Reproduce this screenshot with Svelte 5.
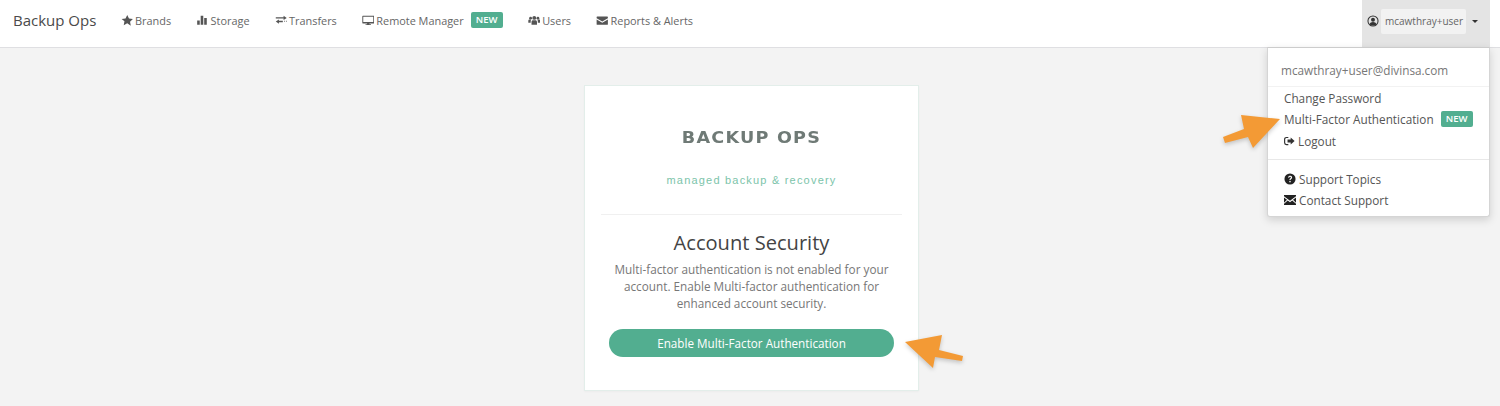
<script>
  const links = [
    { label: 'Brands', icon: 'star' },
    { label: 'Storage', icon: 'bars' },
    { label: 'Transfers', icon: 'swap' },
    { label: 'Remote Manager', icon: 'monitor', badge: true },
    { label: 'Users', icon: 'users' },
    { label: 'Reports & Alerts', icon: 'mail' }
  ];
</script>

{#snippet icon(name)}
  <svg class="icon" viewBox="0 0 16 14" aria-hidden="true">
    {#if name === 'star'}
      <path d="M8 .5l2.200 4.500 5 .7-3.600 3.500.9 5L8 11.300l-4.500 2.400.9-5L.8 5.700l5-.7z" />
    {:else if name === 'bars'}
      <path d="M1.500 7.500h3.300V13H1.500zM6 1.500h3.300V13H6zM10.500 4.500h3.300V13h-3.300z" />
    {:else if name === 'swap'}
      <path d="M1 3.500h10V1.500l4 2.800-4 2.800v-2H1zM15 8h-1v1.200h1zM12.500 8h-1v1.200h1zM10 8H5V6.300L1 9l4 2.800V9.800h5z" />
    {:else if name === 'monitor'}
      <path fill-rule="evenodd" d="M1 1.500h14a.6.6 0 0 1 .6.6v8.800a.6.6 0 0 1-.6.6H9.500v1h2v1h-7v-1h2v-1H1a.6.6 0 0 1-.6-.6V2.100A.6.6 0 0 1 1 1.500zm.6 1.200v7h12.800v-7z" />
    {:else if name === 'users'}
      <circle cx="8" cy="4.300" r="2.500" /><circle cx="3.300" cy="4.600" r="1.800" /><circle cx="12.700" cy="4.600" r="1.800" />
      <path d="M4.500 13V9.500c0-1.500 1-2.300 2-2.300h3c1 0 2 .8 2 2.300V13zM.4 10.500V8c0-1 .7-1.500 1.500-1.500h1.900C3.500 7.500 3.400 9 3.400 10.500zM15.600 10.500V8c0-1-.7-1.500-1.500-1.500h-1.900c.3 1 .4 2.500.4 4z" />
    {:else if name === 'mail'}
      <path d="M.8 4.800 8 9l7.200-4.200V3.200c0-.5-.3-.8-.8-.8H1.600c-.5 0-.8.3-.8.8zM.8 6.300v6c0 .5.3.8.8.8h12.800c.5 0 .8-.3.8-.8v-6L8 10.500z" />
    {/if}
  </svg>
{/snippet}

<div class="page">
  <header class="nav">
    <span class="brand">Backup Ops</span>
    <nav class="links">
      {#each links as link}
        <span class="link">
          {@render icon(link.icon)}
          <span>{link.label}</span>
          {#if link.badge}<span class="badge nav-badge">NEW</span>{/if}
        </span>
      {/each}
    </nav>
    <div class="user">
      <svg class="avatar" viewBox="0 0 14 14" aria-hidden="true">
        <circle cx="7" cy="7" r="5.900" fill="none" stroke="#333" stroke-width="1.200" />
        <circle cx="7" cy="5.500" r="2.300" fill="#333" />
        <path d="M3 11c.5-2 2-2.800 4-2.800s3.500.8 4 2.800c-2 1.500-6 1.500-8 0z" fill="#333" />
      </svg>
      <span class="username">mcawthray+user</span>
      <span class="caret"></span>
    </div>
  </header>

  <main class="main">
    <section class="card">
      <div class="logo">BACKUP OPS</div>
      <div class="tagline">managed backup &amp; recovery</div>
      <hr class="rule" />
      <h1 class="title">Account Security</h1>
      <p class="copy">Multi-factor authentication is not enabled for your account. Enable Multi-factor authentication for enhanced account security.</p>
      <button class="cta">Enable Multi-Factor Authentication</button>
    </section>
  </main>

  <div class="menu">
    <div class="menu-head">mcawthray+user@divinsa.com</div>
    <div class="menu-group first">
      <div class="item">Change Password</div>
      <div class="item">Multi-Factor Authentication <span class="badge menu-badge">NEW</span></div>
      <div class="item">
        <svg class="mi small" viewBox="0 0 14 12" aria-hidden="true">
          <path d="M5.500 1.500H3A2.200 2.200 0 0 0 .8 3.700v4.600A2.200 2.200 0 0 0 3 10.500h2.500" fill="none" stroke="#333" stroke-width="1.500" />
          <path d="M8.500 1.500 13.500 6l-5 4.500V8H4.500V4h4z" fill="#333" />
        </svg>Logout
      </div>
    </div>
    <div class="menu-group second">
      <div class="item">
        <svg class="mi" viewBox="0 0 14 14" aria-hidden="true">
          <circle cx="7" cy="7" r="6.500" fill="#222" />
          <path d="M4.700 5.300C4.900 3.900 5.900 3.300 7.100 3.300c1.400 0 2.400.8 2.400 2 0 1.700-1.800 1.600-1.800 3H6.300c0-2.200 1.700-2 1.700-3 0-.5-.4-.8-1-.8-.6 0-.9.400-1 .9z" fill="#fff" />
          <rect x="6.200" y="9.200" width="1.600" height="1.600" fill="#fff" />
        </svg>Support Topics
      </div>
      <div class="item">
        <svg class="mi" viewBox="0 0 14 12" aria-hidden="true">
          <path d="M0 .3h14v1.200L7 6.800 0 1.500zM0 3 3.500 5.800 0 9.300zM14 3 10.500 5.800 14 9.300zM4.400 6.500 7 8.500l2.600-2 4.400 4v1.200H0v-1.200z" fill="#222" />
        </svg>Contact Support
      </div>
    </div>
  </div>

  <svg class="arrow arrow-menu" viewBox="0 0 70 45" aria-hidden="true">
    <path d="M59 15 20 11l3 14-21 8 2 6 23-6 5 11z" />
  </svg>
  <svg class="arrow arrow-cta" viewBox="0 0 70 45" aria-hidden="true">
    <path d="M4 14 41 7l-3 15 24 6-1 5-27-4-2 11z" />
  </svg>
</div>

<style>
  :global(body) {
    margin: 0;
    background: #f2f2f2;
    font-family: "Open Sans", "Noto Sans", sans-serif;
  }
  .page {
    position: relative;
    width: 1500px;
    height: 406px;
    overflow: hidden;
    background: #f3f3f3;
  }
  .nav {
    display: flex;
    align-items: center;
    box-sizing: border-box;
    height: 48px;
    background: #fff;
    border-bottom: 1px solid #dfdfe2;
    padding: 0 10px 7px 13px;
  }
  .brand {
    font-size: 15px;
    color: #4a4a4a;
    width: 107.500px;
    flex: none;
  }
  .links {
    display: flex;
    align-items: center;
    gap: 25px;
    flex: 1;
    font-size: 10.900px;
    color: #666;
  }
  .link {
    display: flex;
    align-items: center;
    gap: 2px;
    white-space: nowrap;
  }
  .icon {
    width: 12.500px;
    height: 12px;
    fill: #555;
    flex: none;
  }
  .badge {
    display: inline-block;
    background: #52ae90;
    color: #fff;
    font-weight: 600;
    font-size: 9.500px;
    line-height: 16px;
    border-radius: 2px;
    text-align: center;
  }
  .nav-badge {
    width: 32px;
    margin-left: 5px;
  }
  .user {
    align-self: stretch;
    margin: 0 0 -7px;
    width: 128px;
    flex: none;
    display: flex;
    align-items: center;
    box-sizing: border-box;
    padding: 0 0 5px 5px;
    background: #e4e4e4;
    font-size: 10px;
    color: #666;
  }
  .avatar {
    width: 12px;
    height: 12px;
    flex: none;
  }
  .username {
    margin-left: 2px;
    background: #f2f2f2;
    border-radius: 2px;
    padding: 0 3px 0 4px;
    line-height: 25px;
    white-space: nowrap;
  }
  .caret {
    margin-left: 6px;
    border-left: 3px solid transparent;
    border-right: 3px solid transparent;
    border-top: 3px solid #333;
  }
  .main {
    display: flex;
    justify-content: center;
    padding-top: 37px;
  }
  .card {
    box-sizing: border-box;
    width: 335px;
    height: 306px;
    margin-left: 3px;
    padding: 0 16px;
    background: #fff;
    border: 1px solid #e3eeea;
    box-shadow: 0 1px 2px rgba(0, 0, 0, 0.03);
    text-align: center;
  }
  .logo {
    margin-top: 42px;
    font-family: "DejaVu Sans", sans-serif;
    font-weight: 700;
    font-size: 16px;
    line-height: 20px;
    letter-spacing: 1.100px;
    color: #6f7a76;
    transform: scaleX(1.1);
  }
  .tagline {
    margin-top: 25px;
    font-family: "Liberation Sans", sans-serif;
    font-size: 11px;
    line-height: 14px;
    letter-spacing: 1.200px;
    color: #7cc4aa;
  }
  .rule {
    border: 0;
    border-top: 1px solid #f0f0f0;
    margin: 27px 0 0;
  }
  .title {
    margin: 13px 0 0;
    font-size: 20.100px;
    font-weight: 400;
    line-height: 30px;
    color: #444;
  }
  .copy {
    margin: 3px 8px 0;
    font-size: 11.750px;
    line-height: 17px;
    color: #777;
  }
  .cta {
    display: block;
    width: 285px;
    height: 28px;
    margin: 17px 0 0 8px;
    padding: 0;
    border: 0;
    border-radius: 14px;
    background: #52ae90;
    color: #fff;
    font: 400 11.700px "Open Sans", sans-serif;
  }
  .menu {
    position: absolute;
    top: 47px;
    left: 1267px;
    width: 223px;
    box-sizing: border-box;
    height: 170px;
    background: #fff;
    border-radius: 0 0 3px 3px;
    border: 1px solid #d5d5d5;
    border-top-color: #ccc;
    box-shadow: 0 3px 8px rgba(0, 0, 0, 0.15);
    font-size: 11.750px;
    color: #555;
  }
  .menu-head {
    box-sizing: border-box;
    height: 39px;
    padding: 14px 0 0 13px;
    line-height: 17px;
    color: #777;
    border-bottom: 1px solid #f2f2f2;
  }
  .menu-group { padding: 0 16px; }
  .menu-group.first { height: 72px; border-bottom: 1px solid #e8e8e8; }
  .menu-group.second { padding-top: 8px; }
  .item {
    display: flex;
    align-items: center;
    height: 21.600px;
    white-space: nowrap;
  }
  .mi {
    width: 12px;
    height: 12px;
    margin-right: 3px;
    flex: none;
  }
  .mi.small { width: 11px; height: 10px; }
  .menu-badge {
    width: 32px;
    margin-left: 7px;
  }
  .arrow {
    position: absolute;
    width: 70px;
    height: 45px;
    fill: #f39a35;
    filter: drop-shadow(0 2px 2px rgba(0, 0, 0, 0.2));
  }
  .arrow-menu { left: 1221px; top: 104px; }
  .arrow-cta { left: 901px; top: 328px; }
</style>
